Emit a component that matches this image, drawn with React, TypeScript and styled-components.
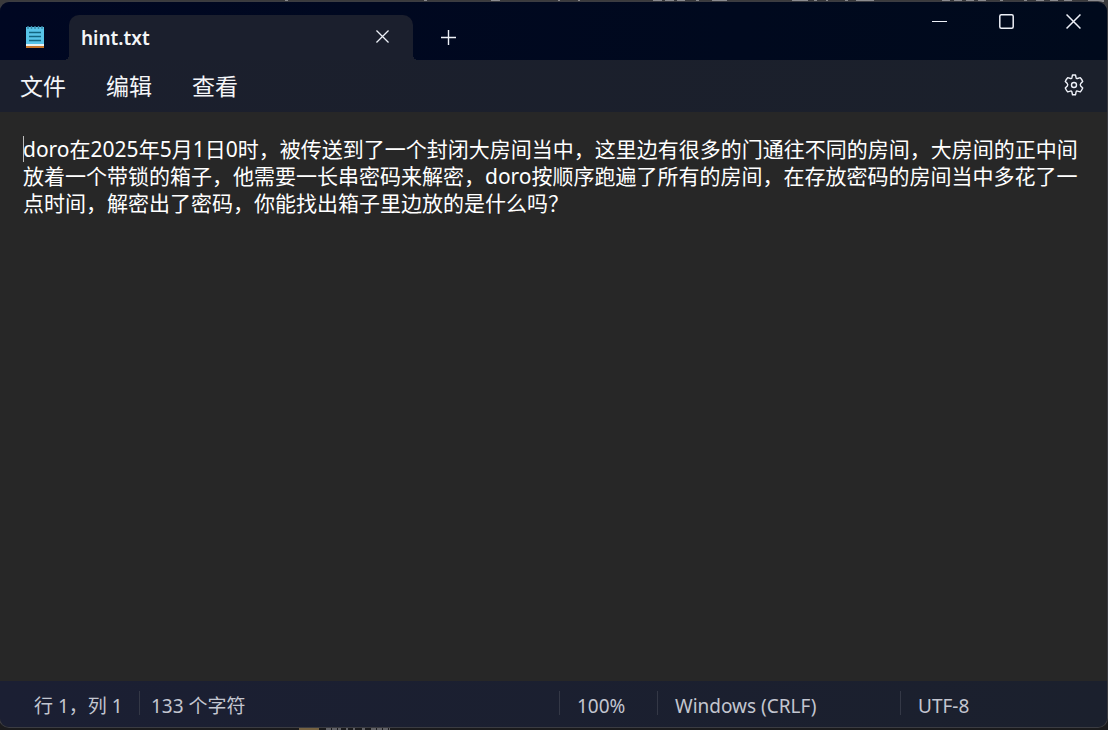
import React, { useState } from "react";
import styled, { createGlobalStyle } from "styled-components";

const GlobalStyle = createGlobalStyle`
  * { box-sizing: border-box; }
  body { margin: 0; background: #1b1b1d; }
  button, textarea { font: inherit; color: inherit; border: 0; background: none; padding: 0; margin: 0; }
`;

const Desktop = styled.div`
  position: relative;
  height: 100vh;
  padding: 2px 1px 3px 0;
  background: linear-gradient(#3a3a3c 0, #3a3a3c 30px, #1b1b1d 60px);
  font-family: "Noto Sans", "Noto Sans CJK SC", sans-serif;
  color: #f4f5f8;
  overflow: hidden;
`;

/* Slivers of the file list that peeks out around the window */
const Behind = styled.svg<{ $edge: "top" | "bottom" }>`
  position: absolute;
  left: 0;
  ${(p) => p.$edge}: 0;
  display: block;
`;

const Window = styled.main`
  position: relative;
  display: flex;
  flex-direction: column;
  height: 100%;
  border-radius: 9px;
  overflow: hidden;
  background: #272727;
  box-shadow: 0 0 0 1px #3b3c42;
`;

const TitleBar = styled.header`
  display: flex;
  height: 58px;
  background: linear-gradient(90deg, #000722, #000a1c);
`;

const AppIcon = styled.svg`
  flex: none;
  width: 20px;
  height: 24px;
  margin: 22px 24px 0 25px;
`;

const Tab = styled.div`
  position: relative;
  display: flex;
  justify-content: space-between;
  width: 344px;
  margin-top: 13px;
  padding: 8px 24px 0 12px;
  border-radius: 10px 10px 0 0;
  background: #1b1f2d;
  font-size: 19px;
  line-height: 30px;
  font-weight: 600;
  &::before, &::after {
    content: "";
    position: absolute;
    bottom: 0;
    width: 5px;
    height: 5px;
  }
  &::before { right: 100%; background: radial-gradient(circle at 0 0, transparent 5px, #1b1f2d 5px); }
  &::after { left: 100%; background: radial-gradient(circle at 100% 0, transparent 5px, #1b1f2d 5px); }
`;

const IconButton = styled.button`
  display: grid;
  place-items: center;
  width: 14px;
  height: 26px;
  svg { display: block; overflow: visible; }
`;

const NewTab = styled(IconButton)`
  width: 40px;
  height: 45px;
  margin: 13px 0 0 15px;
`;

const Controls = styled.div`
  display: flex;
  margin-left: auto;
`;

const ControlButton = styled(IconButton)`
  width: 67px;
  height: 38px;
`;

const MenuBar = styled.nav`
  display: flex;
  align-items: center;
  height: 52px;
  padding: 0 22px 2px 20px;
  gap: 40px;
  background: linear-gradient(90deg, #1b1f2d, #1b202b);
  font-size: 23px;
`;

const Settings = styled(IconButton)`
  width: 22px;
  height: 22px;
  margin-left: auto;
`;

const EditorArea = styled.section`
  position: relative;
  flex: 1;
  display: flex;
  min-height: 0;
`;

const Editor = styled.textarea`
  flex: 1;
  min-height: 0;
  width: 100%;
  padding: 24px 16px 0 23px;
  resize: none;
  outline: none;
  font-size: 21px;
  line-height: 27px;
  color: #ffffff;
`;

const Caret = styled.span`
  position: absolute;
  left: 23px;
  top: 24px;
  width: 1px;
  height: 26px;
  background: #bdbdbd;
`;

const StatusBar = styled.footer`
  display: flex;
  height: 46px;
  padding: 10px 0 0 34px;
  background: linear-gradient(90deg, #1b1f33, #1b202d);
  font-size: 19px;
  line-height: 30px;
  color: #c3c6d0;
`;

const Status = styled.span<{ $width?: number; $pad?: number }>`
  flex: none;
  ${(p) => (p.$width ? `width: ${p.$width}px;` : "flex: 1;")}
  white-space: nowrap;
  &:not(:first-child) {
    padding-left: ${(p) => p.$pad ?? 18}px;
    background: linear-gradient(#343846, #343846) left top / 1px 24px no-repeat;
  }
`;

const NOTE =
  "doro在2025年5月1日0时，被传送到了一个封闭大房间当中，这里边有很多的门通往不同的房间，大房间的正中间放着一个带锁的箱子，他需要一长串密码来解密，doro按顺序跑遍了所有的房间，在存放密码的房间当中多花了一点时间，解密出了密码，你能找出箱子里边放的是什么吗？";

const Cross = ({ size }: { size: number }) => (
  <svg width={size} height={size} viewBox="0 0 14 14" fill="none" stroke="#eef1f8" strokeWidth="1.4">
    <path d="M.5.5l13 13M13.5.5l-13 13" />
  </svg>
);

export default function App() {
  const [text, setText] = useState(NOTE);
  return (
    <Desktop>
      <GlobalStyle />
      <Behind $edge="top" width="1108" height="2" stroke="#8b8b8e" strokeWidth="2" aria-hidden="true">
        <path d="M285 1h3M424 1h3M491 1h9M558 1h2M578 1h2M653 1h9M665 1h9M677 1h8M696 1h3M712 1h15M792 1h16M814 1h3M826 1h2M845 1h3M856 1h18M942 1h8M954 1h8M966 1h8M978 1h8M1000 1h3M1024 1h3M1036 1h8M1050 1h8M1064 1h8M1088 1h16" />
      </Behind>
      <Behind $edge="bottom" width="400" height="3" strokeWidth="2" aria-hidden="true">
        <path d="M299 2h20" stroke="#776342" />
        <path d="M326 2h15M346 2h2M353 2h2M362 2h3M371 2h19" stroke="#626266" strokeDasharray="5 1" />
      </Behind>
      <Window>
        <TitleBar>
          <AppIcon viewBox="0 0 20 24" aria-hidden="true">
            <path d="M1 3h18v18H1z" fill="#58c4e8" />
            <path d="M1 20h18v2H1z" fill="#e8f3f5" />
            <path d="M1 22h18v2H1z" fill="#c87528" />
            <path d="M3 2v3M6.500 2v3M10 2v3M13.500 2v3M17 2v3" stroke="#3a86a5" strokeWidth="1.4" />
            <path d="M4 8.500h12M4 12.500h12M4 16.500h12" stroke="#12657f" strokeWidth="1.300" />
          </AppIcon>
          <Tab>
            <span>hint.txt</span>
            <IconButton aria-label="关闭标签页"><Cross size={13} /></IconButton>
          </Tab>
          <NewTab aria-label="新建标签页">
            <svg width="15" height="15" viewBox="0 0 15 15" stroke="#eef1f8" strokeWidth="1.4">
              <path d="M7.5 0v15M0 7.5h15" />
            </svg>
          </NewTab>
          <Controls>
            <ControlButton aria-label="最小化">
              <svg width="15" height="15" viewBox="0 0 15 15" stroke="#eef1f8" strokeWidth="1.2"><path d="M0 7.5h15" /></svg>
            </ControlButton>
            <ControlButton aria-label="最大化">
              <svg width="15" height="15" viewBox="0 0 15 15" fill="none" stroke="#eef1f8" strokeWidth="1.5"><rect x="0.800" y="0.800" width="13.400" height="13.400" rx="1.500" /></svg>
            </ControlButton>
            <ControlButton aria-label="关闭"><Cross size={15} /></ControlButton>
          </Controls>
        </TitleBar>
        <MenuBar>
          <button>文件</button>
          <button>编辑</button>
          <button>查看</button>
          <Settings aria-label="设置">
            <svg width="22" height="22" viewBox="0 0 22 22" fill="none" stroke="#eef1f8" strokeWidth="1.4" strokeLinejoin="round">
              <path d="M9.500 1h3l.6 2.700q.3 1.100 1.400.8l2.800-.8q1.600 1.600 2.400 3.800l-2 2.100q-.9 1.200 0 2.400l2 2.100q-.8 2.200-2.400 3.800l-2.800-.8q-1.100-.3-1.400.8l-.6 2.900h-3l-.6-2.900q-.3-1.100-1.400-.8l-2.800.8q-1.600-1.600-2.400-3.800l2-2.100q.9-1.200 0-2.400l-2-2.100q.8-2.200 2.400-3.800l2.800.8q1.100.3 1.400-.8z" />
              <circle cx="11" cy="11" r="2.500" />
            </svg>
          </Settings>
        </MenuBar>
        <EditorArea>
          <Editor aria-label="文本编辑器" spellCheck={false} value={text} onChange={(e) => setText(e.target.value)} />
          <Caret />
        </EditorArea>
        <StatusBar>
          <Status $width={105}>行 1，列 1</Status>
          <Status $pad={12}>133 个字符</Status>
          <Status $width={98}>100%</Status>
          <Status $width={243}>Windows (CRLF)</Status>
          <Status $width={207}>UTF-8</Status>
        </StatusBar>
      </Window>
    </Desktop>
  );
}
